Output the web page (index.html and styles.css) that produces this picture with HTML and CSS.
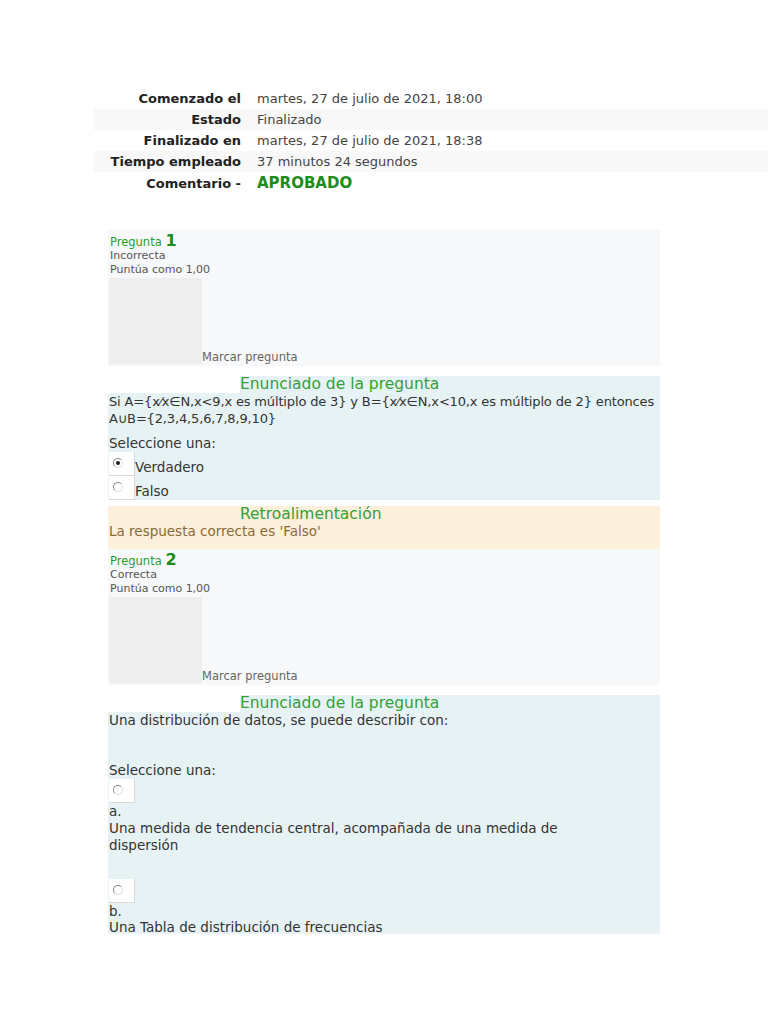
FILE: index.html
```html
<!DOCTYPE html>
<html lang="es">
<head>
    <meta charset="UTF-8">
    <meta name="viewport" content="width=device-width, initial-scale=1.0">
    <title>Revisión del intento</title>
    <link rel="stylesheet" href="styles.css">
</head>
<body>
    <div class="page">
        <table class="summary">
            <tr>
                <th>Comenzado el</th>
                <td>martes, 27 de julio de 2021, 18:00</td>
            </tr>
            <tr class="stripe">
                <th>Estado</th>
                <td>Finalizado</td>
            </tr>
            <tr>
                <th>Finalizado en</th>
                <td>martes, 27 de julio de 2021, 18:38</td>
            </tr>
            <tr class="stripe">
                <th>Tiempo empleado</th>
                <td>37 minutos 24 segundos</td>
            </tr>
            <tr>
                <th>Comentario -</th>
                <td class="grade">APROBADO</td>
            </tr>
        </table>

        <!-- Pregunta 1 -->
        <div class="que first">
            <div class="info">
                <div class="qno">Pregunta <span class="num">1</span></div>
                <div class="state">Incorrecta</div>
                <div class="grade-info">Puntúa como 1,00</div>
                <div class="flag-row">
                    <div class="flag-box"></div>
                    <span class="flag-text">Marcar pregunta</span>
                </div>
            </div>
            <div class="content">
                <h4 class="content-title">Enunciado de la pregunta</h4>
                <div class="formulation">
                    <p class="qtext tight">Si A={x⁄x∈N,x&lt;9,x es múltiplo de 3} y B={x⁄x∈N,x&lt;10,x es múltiplo de 2} entonces A∪B={2,3,4,5,6,7,8,9,10}</p>
                    <p class="prompt">Seleccione una:</p>
                    <div class="option inline">
                        <span class="radio-box"><span class="radio checked"></span></span>
                        <span>Verdadero</span>
                    </div>
                    <div class="option inline">
                        <span class="radio-box"><span class="radio"></span></span>
                        <span>Falso</span>
                    </div>
                </div>
            </div>
            <div class="outcome">
                <h4 class="content-title">Retroalimentación</h4>
                <div class="feedback">La respuesta correcta es 'Falso'</div>
            </div>
        </div>

        <!-- Pregunta 2 -->
        <div class="que">
            <div class="info">
                <div class="qno">Pregunta <span class="num">2</span></div>
                <div class="state">Correcta</div>
                <div class="grade-info">Puntúa como 1,00</div>
                <div class="flag-row">
                    <div class="flag-box"></div>
                    <span class="flag-text">Marcar pregunta</span>
                </div>
            </div>
            <div class="content">
                <h4 class="content-title">Enunciado de la pregunta</h4>
                <div class="formulation">
                    <p class="qtext spaced">Una distribución de datos, se puede describir con:</p>
                    <p class="prompt">Seleccione una:</p>
                    <div class="option">
                        <span class="radio-box"><span class="radio"></span></span>
                        <div>a.</div>
                        <div>Una medida de tendencia central, acompañada de una medida de<br>dispersión</div>
                    </div>
                    <div class="option second">
                        <span class="radio-box"><span class="radio"></span></span>
                        <div>b.</div>
                        <div class="last-line">Una Tabla de distribución de frecuencias</div>
                    </div>
                </div>
            </div>
        </div>
    </div>
</body>
</html>
```

FILE: styles.css
```css
html, body {
    margin: 0;
    padding: 0;
    background-color: #fff;
    overflow: hidden;
}
body {
    font-family: "DejaVu Sans", "Liberation Sans", sans-serif;
    color: #333;
}
.page {
    padding-top: 88px;
}
.summary {
    margin-left: 94px;
    width: 674px;
    border-collapse: collapse;
    font-size: 13px;
}
.summary th,
.summary td {
    height: 21px;
    padding: 0;
    vertical-align: middle;
}
.summary th {
    width: 147px;
    text-align: right;
    font-weight: bold;
    color: #222;
    padding-right: 16px;
}
.summary td {
    color: #444;
}
.summary .stripe {
    background-color: #f8f8f8;
}
.summary td.grade {
    height: 22px;
    font-size: 15px;
    font-weight: bold;
    color: #1c8c1c;
}
.que {
    margin-left: 108px;
    width: 552px;
}
.que.first {
    margin-top: 36px;
}
.info {
    background-color: #f7f8f9;
    padding: 4px 0 2px 1px;
    font-size: 11px;
    line-height: 14px;
    color: #555;
}
.qno {
    height: 15px;
    font-size: 11.5px;
    color: #2a9e2a;
    padding-left: 1px;
}
.qno .num {
    font-size: 16px;
    line-height: 14px;
    font-weight: bold;
    color: #1c8c1c;
}
.state,
.grade-info {
    padding-left: 1px;
}
.flag-row {
    display: flex;
    align-items: flex-end;
    margin-top: 1px;
}
.flag-box {
    width: 93px;
    height: 86px;
    background-color: #eeeeee;
}
.flag-text {
    font-size: 11.5px;
    line-height: 12px;
    margin-bottom: 1px;
    color: #666;
}
.content {
    margin-top: 10px;
    font-size: 13.5px;
    line-height: 17px;
}
.content-title {
    margin: 0 0 0 132px;
    font-size: 15.5px;
    font-weight: normal;
    line-height: 17px;
    color: #35a035;
    background-color: #e7f2f4;
}
.formulation {
    background-color: #e7f2f4;
    padding: 0 0 0 1px;
    color: #333;
}
.formulation p {
    margin: 0;
}
.qtext.tight {
    font-size: 13px;
    letter-spacing: -0.15px;
}
.qtext.spaced {
    margin-bottom: 33px !important;
}
.prompt {
    margin-top: 8px !important;
}
.qtext.spaced + .prompt {
    margin-top: 0 !important;
}
.option.inline {
    display: flex;
    align-items: flex-end;
}
.option.second {
    margin-top: 25px;
}
.last-line {
    line-height: 14px;
}
.radio-box {
    display: block;
    position: relative;
    width: 25px;
    height: 23px;
    background-color: #fff;
    border-right: 1px solid #d8d8d8;
    border-bottom: 1px solid #d8d8d8;
    box-sizing: content-box;
    flex-shrink: 0;
}
.radio {
    position: absolute;
    left: 4px;
    top: 6px;
    width: 8px;
    height: 8px;
    border-radius: 50%;
    border: 1px solid;
    border-color: #8a8a8a #dcdcdc #dcdcdc #8a8a8a;
    background-color: #fff;
}
.radio.checked::after {
    content: "";
    position: absolute;
    left: 2px;
    top: 2px;
    width: 4px;
    height: 4px;
    border-radius: 50%;
    background-color: #222;
}
.outcome {
    margin-top: 6px;
    background-color: #fcefdc;
    font-size: 13.5px;
    line-height: 17px;
    padding-bottom: 9px;
}
.outcome .content-title {
    background-color: transparent;
}
.feedback {
    color: #8a6a3a;
    padding-left: 1px;
}
```
